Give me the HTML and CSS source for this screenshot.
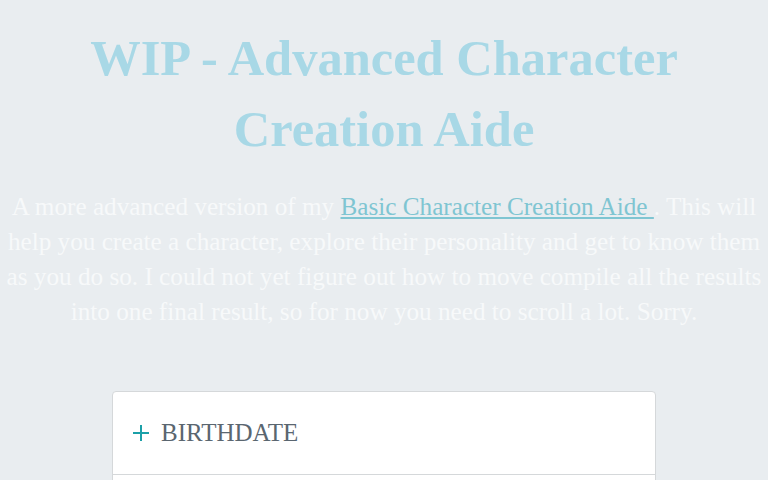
FILE: index.html
```html
<!DOCTYPE html>
<html lang="en">
<head>
    <meta charset="UTF-8">
    <meta name="viewport" content="width=device-width, initial-scale=1.0">
    <title>WIP - Advanced Character Creation Aide</title>
    <link rel="stylesheet" href="styles.css">
</head>
<body>
    <header class="intro">
        <h1>WIP - Advanced Character Creation Aide</h1>
        <p>A more advanced version of my <a href="#">Basic Character Creation Aide </a>. This will help you create a character, explore their personality and get to know them as you do so. I could not yet figure out how to move compile all the results into one final result, so for now you need to scroll a lot. Sorry.</p>
    </header>

    <div class="accordion">
        <div class="section">
            <div class="section-head">
                <svg class="plus" width="16" height="16" viewBox="0 0 16 16">
                    <path d="M8 0v16M0 8h16" stroke="#1ba0a8" stroke-width="2" fill="none"/>
                </svg>
                <span>BIRTHDATE</span>
            </div>
        </div>
        <div class="section">
            <div class="section-head">
                <svg class="plus" width="16" height="16" viewBox="0 0 16 16">
                    <path d="M8 0v16M0 8h16" stroke="#1ba0a8" stroke-width="2" fill="none"/>
                </svg>
                <span>APPEARANCE</span>
            </div>
        </div>
    </div>
</body>
</html>
```

FILE: styles.css
```css
body, html {
    margin: 0;
    padding: 0;
    background: #e9edf0;
    font-family: 'Liberation Serif', 'Times New Roman', serif;
}

body {
    padding: 0 4px;
}

.intro {
    text-align: center;
    padding-top: 23px;
}

.intro h1 {
    margin: 0;
    font-size: 50.5px;
    line-height: 71px;
    font-weight: bold;
    color: #a8d8e6;
}

.intro p {
    margin: 24px 0 0;
    font-size: 25.2px;
    line-height: 35px;
    color: #f7f9fa;
}

.intro a {
    color: #7fc5d2;
}

.accordion {
    box-sizing: border-box;
    width: 544px;
    margin: 62px auto 0;
    background: #fff;
    border: 1px solid #d5d8da;
    border-radius: 4px;
}

.section + .section {
    border-top: 1px solid #d5d8da;
}

.section-head {
    display: flex;
    align-items: center;
    gap: 12px;
    height: 82px;
    padding: 0 20px;
    font-size: 25px;
    color: #5a6670;
}

.plus {
    flex: none;
}
```
